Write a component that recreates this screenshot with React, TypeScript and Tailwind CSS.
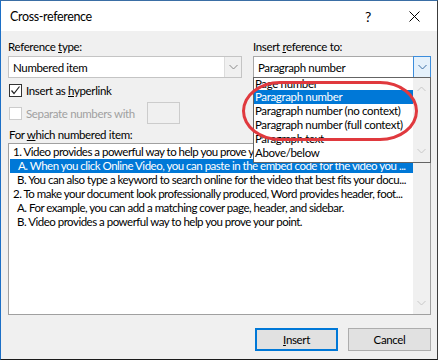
import React from 'react';

const Chevron = ({ color = '#606060', up = false }: { color?: string; up?: boolean }) => (
  <svg width="9" height="6" viewBox="0 0 9 6">
    <polyline
      points={up ? '0.5,5 4.5,1 8.5,5' : '0.5,1 4.5,5 8.5,1'}
      fill="none"
      stroke={color}
      strokeWidth="1"
    />
  </svg>
);

const CheckBox = ({ checked, disabled }: { checked?: boolean; disabled?: boolean }) => (
  <div
    className={`w-[13px] h-[13px] shrink-0 border flex items-center justify-center ${
      disabled ? 'border-[#cccccc] bg-white' : 'border-[#333333] bg-white'
    }`}
  >
    {checked && (
      <svg width="11" height="11" viewBox="0 0 11 11">
        <polyline points="1.5,5.5 4,8.5 9.5,1.5" fill="none" stroke="#222" strokeWidth="1.2" />
      </svg>
    )}
  </div>
);

const items = [
  { text: '1. Video provides a powerful way to help you prove your point.', sub: false },
  { text: 'A. When you click Online Video, you can paste in the embed code for the video you ...', sub: true, selected: true },
  { text: 'B. You can also type a keyword to search online for the video that best fits your docu...', sub: true },
  { text: '2. To make your document look professionally produced, Word provides header, foot...', sub: false },
  { text: 'A. For example, you can add a matching cover page, header, and sidebar.', sub: true },
  { text: 'B. Video provides a powerful way to help you prove your point.', sub: true },
];

const refOptions = [
  'Page number',
  'Paragraph number',
  'Paragraph number (no context)',
  'Paragraph number (full context)',
  'Paragraph text',
  'Above/below',
];

export default function App() {
  return (
    <div className="relative w-[438px] h-[360px] bg-[#f0f0f0] border-l border-t border-l-[#1c6fc6] border-t-[#3a6ea5] border-r border-b border-r-[#3c3c3c] border-b-[#1a1a1a] flex flex-col font-['Lato','Liberation_Sans',sans-serif] text-[11.5px] tracking-[-0.35px] text-black leading-[15px]">
      {/* Title bar */}
      <div className="h-[30px] bg-white flex items-center shrink-0">
        <span className="pl-[9px] text-[12.5px] flex-1">Cross-reference</span>
        <div className="w-[46px] h-full flex items-center justify-center text-[14px]">?</div>
        <div className="w-[46px] h-full flex items-center justify-center">
          <svg width="11" height="11" viewBox="0 0 11 11">
            <path d="M0.5,0.5 L10.5,10.5 M10.5,0.5 L0.5,10.5" stroke="#000" strokeWidth="1" />
          </svg>
        </div>
      </div>

      {/* Body */}
      <div className="flex-1 flex flex-col pl-[7px] pr-[6px] pt-[8px]">
        <div className="flex gap-[11px]">
          {/* Left column */}
          <div className="w-[234px] flex flex-col">
            <label>
              Reference <span className="underline">t</span>ype:
            </label>
            <div className="mt-[2px] h-[22px] bg-white border border-[#c4c4c4] flex items-center">
              <span className="flex-1 pl-[4px]">Numbered item</span>
              <div className="w-[17px] h-[20px] bg-[#f0f0f0] border-l border-[#dcdcdc] flex items-center justify-center">
                <Chevron color="#8a8a8a" />
              </div>
            </div>
            <div className="mt-[5px] h-[15px] flex items-center gap-[4px] pl-[1px]">
              <CheckBox checked />
              <span>
                Insert as <span className="underline">h</span>yperlink
              </span>
            </div>
            <div className="mt-[4px] h-[22px] flex items-center pl-[1px]">
              <CheckBox disabled />
              <span className="ml-[4px] w-[121px] whitespace-nowrap text-[#a0a0a0]">Separate numbers with</span>
              <div className="w-[33px] h-[22px] border border-[#cccccc] bg-[#f0f0f0]" />
            </div>
          </div>

          {/* Right column */}
          <div className="w-[178px] flex flex-col">
            <label>
              Insert <span className="underline">r</span>eference to:
            </label>
            <div className="relative mt-[2px] h-[22px] bg-white border border-[#a8a8a8] flex items-center">
              <span className="flex-1 pl-[4px]">Paragraph number</span>
              <div className="w-[18px] h-[22px] -mr-[1px] bg-[#e5f1fb] border border-[#3c8ddc] flex items-center justify-center">
                <Chevron color="#3a6ea5" />
              </div>

              {/* Open dropdown list */}
              <div className="absolute left-[-1px] top-[20px] w-[178px] h-[86px] bg-white border border-[#646464] z-10 flex overflow-hidden">
                <div className="flex-1 flex flex-col overflow-hidden">
                  {refOptions.map((o, i) => (
                    <div
                      key={o}
                      className={`h-[14px] shrink-0 pl-[1px] leading-[14px] whitespace-nowrap ${
                        i === 0 ? '-mt-[2px] pt-[1px]' : ''
                      } ${i === 1 ? 'bg-[#0078d7] text-white' : ''}`}
                    >
                      {o}
                    </div>
                  ))}
                </div>
                <div className="w-[17px] bg-[#f0f0f0] flex flex-col items-center justify-between py-[8px]">
                  <Chevron color="#c8c8c8" up />
                  <Chevron color="#c8c8c8" />
                </div>
              </div>
            </div>
          </div>
        </div>

        <label className="mt-[3px] ml-[1px]">
          For <span className="underline">w</span>hich numbered item:
        </label>
        <div className="mt-[1px] h-[172px] bg-white border border-[#a0a0a0] flex">
          <div className="flex-1 flex flex-col pt-[1px] overflow-hidden tracking-[-0.5px]">
            {items.map((it) => (
              <div
                key={it.text}
                className={`h-[14px] leading-[14px] whitespace-nowrap ${
                  it.sub ? 'pl-[8px]' : 'pl-[4px]'
                } ${it.selected ? 'bg-[#0078d7] text-white ml-[1px] pl-[7px]' : ''}`}
              >
                {it.text}
              </div>
            ))}
          </div>
          <div className="w-[17px] bg-[#f0f0f0] flex flex-col justify-end items-center pb-[8px]">
            <Chevron color="#c8c8c8" />
          </div>
        </div>

        {/* Buttons */}
        <div className="mt-[13px] flex justify-end gap-[10px]">
          <button className="w-[83px] h-[23px] bg-[#e1e1e1] border border-[#0078d7] shadow-[inset_0_0_0_1px_#0078d7]">
            <span className="underline">I</span>nsert
          </button>
          <button className="w-[83px] h-[23px] bg-[#e1e1e1] border border-[#adadad]">Cancel</button>
        </div>
      </div>

      {/* Red annotation around the options */}
      <div className="absolute left-[241px] top-[80px] w-[176px] h-[60px] border-[3px] border-[#e0393e] [border-radius:38px/30px] pointer-events-none z-20" />
    </div>
  );
}
